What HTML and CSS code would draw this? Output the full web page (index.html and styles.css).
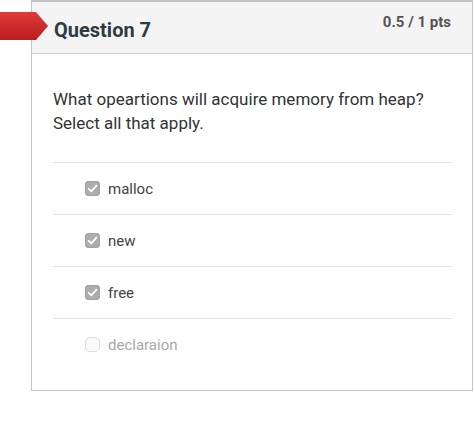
FILE: index.html
```html
<!DOCTYPE html>
<html>
<head>
<meta charset="utf-8">
<link rel="stylesheet" href="styles.css">
</head>
<body>
<div class="card">
  <div class="header">
    <div class="tag"></div>
    <h2 class="title">Question 7</h2>
    <div class="pts">0.5 / 1 pts</div>
  </div>
  <div class="content">
    <p class="question">What opeartions will acquire memory from heap?<br>Select all that apply.</p>
    <ul class="answers">
      <li class="answer">
        <span class="box checked"><svg viewBox="0 0 15 15" width="15" height="15"><path d="M3.6 7.8 L6.3 10.4 L11.4 4.6" fill="none" stroke="#fff" stroke-width="1.8" stroke-linecap="round" stroke-linejoin="round"/></svg></span>
        <span class="label">malloc</span>
      </li>
      <li class="answer">
        <span class="box checked"><svg viewBox="0 0 15 15" width="15" height="15"><path d="M3.6 7.8 L6.3 10.4 L11.4 4.6" fill="none" stroke="#fff" stroke-width="1.8" stroke-linecap="round" stroke-linejoin="round"/></svg></span>
        <span class="label">new</span>
      </li>
      <li class="answer">
        <span class="box checked"><svg viewBox="0 0 15 15" width="15" height="15"><path d="M3.6 7.8 L6.3 10.4 L11.4 4.6" fill="none" stroke="#fff" stroke-width="1.8" stroke-linecap="round" stroke-linejoin="round"/></svg></span>
        <span class="label">free</span>
      </li>
      <li class="answer">
        <span class="box empty"></span>
        <span class="label muted">declaraion</span>
      </li>
    </ul>
  </div>
</div>
</body>
</html>
```
FILE: styles.css
```css
html, body {
  margin: 0;
  padding: 0;
  background: #fff;
}
body {
  font-family: Roboto, "Liberation Sans", sans-serif;
  color: #333;
}
.card {
  margin-left: 31px;
  width: 440px;
  border: 1px solid #c4c4c4;
  border-top-width: 2px;
  background: #fff;
}
.header {
  position: relative;
  height: 51px;
  background: #f4f4f4;
  border-bottom: 1px solid #cfcfcf;
  display: flex;
  justify-content: space-between;
  padding: 0 21px 0 22px;
}
.tag {
  position: absolute;
  left: -32px;
  top: 10px;
  width: 48px;
  height: 28px;
  background: linear-gradient(#e33b3b, #b71d1d);
  clip-path: polygon(0 0, 36px 0, 48px 14px, 36px 28px, 0 28px);
}
.title {
  margin: 0;
  padding-top: 16px;
  font-size: 20px;
  line-height: 24px;
  font-weight: 700;
  color: #2d3b45;
}
.pts {
  padding-top: 11px;
  font-size: 15px;
  line-height: 18px;
  font-weight: 700;
  color: #555;
}
.content {
  padding: 33px 20px 20px 21px;
}
.question {
  margin: 0 0 27px;
  font-size: 17px;
  line-height: 24px;
  color: #333;
}
.answers {
  list-style: none;
  margin: 0;
  padding: 0;
  border-top: 1px solid #e2e2e2;
}
.answer {
  display: flex;
  align-items: center;
  gap: 8px;
  height: 51px;
  padding-left: 32px;
  border-bottom: 1px solid #e2e2e2;
}
.answer:last-child {
  border-bottom: none;
}
.box {
  width: 15px;
  height: 15px;
  border-radius: 4px;
  flex: none;
  display: block;
}
.box svg {
  display: block;
}
.checked {
  background: #adadad;
  box-shadow: inset 0 0 0 1px #a3a3a3;
}
.empty {
  box-sizing: border-box;
  border: 1px solid #dcdcdc;
  border-radius: 5px;
  background: #fafafa;
}
.label {
  font-size: 15px;
  color: #444;
}
.muted {
  color: #a8a8a8;
}
```
